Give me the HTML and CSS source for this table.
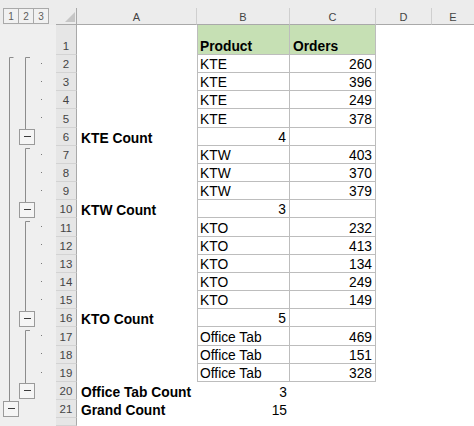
FILE: index.html
```html
<!DOCTYPE html>
<html>
<head>
<meta charset="utf-8">
<link rel="stylesheet" href="styles.css">
</head>
<body>
<div class="sheet">
  <div class="strip"></div>
  <div class="levels"><span class="lv">1</span><span class="lv">2</span><span class="lv">3</span></div>
  <div class="corner"><svg class="tri" width="20" height="16" viewBox="0 0 20 16"><polygon points="9,14 19,14 19,4" fill="#c6c6c6"/></svg></div>
  <div class="ch">A</div><div class="ch">B</div><div class="ch">C</div><div class="ch">D</div><div class="ch last">E</div>

  <div class="outline">
    <svg width="56" height="401" viewBox="0 0 56 401">
      <g fill="none" stroke="#8c8c8c" stroke-width="1">
        <path d="M13.5 32.5H9.5V376.5"/>
        <path d="M30 32.5H25.5V104.5"/>
        <path d="M30 123.5H25.5V177.5"/>
        <path d="M30 196.5H25.5V286.5"/>
        <path d="M30 305.5H25.5V358.5"/>
      </g>
      <g fill="#f5f5f5" stroke="#9a9a9a" stroke-width="1">
        <rect x="19.5" y="104.5" width="15" height="15"/>
        <rect x="19.5" y="177.5" width="15" height="15"/>
        <rect x="19.5" y="286.5" width="15" height="15"/>
        <rect x="19.5" y="358.5" width="15" height="15"/>
        <rect x="3.5" y="376.5" width="15" height="15"/>
      </g>
      <g fill="#3c3c3c">
        <rect x="24" y="111" width="7" height="1"/>
        <rect x="24" y="184" width="7" height="1"/>
        <rect x="24" y="293" width="7" height="1"/>
        <rect x="24" y="365" width="7" height="1"/>
        <rect x="8" y="383" width="7" height="1"/>
      </g>
      <g fill="#7a7a7a">
        <rect x="41" y="38" width="1" height="1"/>
        <rect x="41" y="56" width="1" height="1"/>
        <rect x="41" y="74" width="1" height="1"/>
        <rect x="41" y="92" width="1" height="1"/>
        <rect x="41" y="129" width="1" height="1"/>
        <rect x="41" y="147" width="1" height="1"/>
        <rect x="41" y="165" width="1" height="1"/>
        <rect x="41" y="201" width="1" height="1"/>
        <rect x="41" y="219" width="1" height="1"/>
        <rect x="41" y="238" width="1" height="1"/>
        <rect x="41" y="256" width="1" height="1"/>
        <rect x="41" y="274" width="1" height="1"/>
        <rect x="41" y="310" width="1" height="1"/>
        <rect x="41" y="328" width="1" height="1"/>
        <rect x="41" y="347" width="1" height="1"/>
      </g>
    </svg>
  </div>

  <div class="rh">1</div><div class="cell"></div><div class="cell t tl g b">Product</div><div class="cell t g b">Orders</div>
  <div class="rh">2</div><div class="cell"></div><div class="cell t tl">KTE</div><div class="cell t n">260</div>
  <div class="rh">3</div><div class="cell"></div><div class="cell t tl">KTE</div><div class="cell t n">396</div>
  <div class="rh">4</div><div class="cell"></div><div class="cell t tl">KTE</div><div class="cell t n">249</div>
  <div class="rh">5</div><div class="cell"></div><div class="cell t tl">KTE</div><div class="cell t n">378</div>
  <div class="rh">6</div><div class="cell a b">KTE Count</div><div class="cell t tl n">4</div><div class="cell t"></div>
  <div class="rh">7</div><div class="cell"></div><div class="cell t tl">KTW</div><div class="cell t n">403</div>
  <div class="rh">8</div><div class="cell"></div><div class="cell t tl">KTW</div><div class="cell t n">370</div>
  <div class="rh">9</div><div class="cell"></div><div class="cell t tl">KTW</div><div class="cell t n">379</div>
  <div class="rh">10</div><div class="cell a b">KTW Count</div><div class="cell t tl n">3</div><div class="cell t"></div>
  <div class="rh">11</div><div class="cell"></div><div class="cell t tl">KTO</div><div class="cell t n">232</div>
  <div class="rh">12</div><div class="cell"></div><div class="cell t tl">KTO</div><div class="cell t n">413</div>
  <div class="rh">13</div><div class="cell"></div><div class="cell t tl">KTO</div><div class="cell t n">134</div>
  <div class="rh">14</div><div class="cell"></div><div class="cell t tl">KTO</div><div class="cell t n">249</div>
  <div class="rh">15</div><div class="cell"></div><div class="cell t tl">KTO</div><div class="cell t n">149</div>
  <div class="rh">16</div><div class="cell a b">KTO Count</div><div class="cell t tl n">5</div><div class="cell t"></div>
  <div class="rh">17</div><div class="cell"></div><div class="cell t tl">Office Tab</div><div class="cell t n">469</div>
  <div class="rh">18</div><div class="cell"></div><div class="cell t tl">Office Tab</div><div class="cell t n">151</div>
  <div class="rh">19</div><div class="cell"></div><div class="cell t tl">Office Tab</div><div class="cell t n">328</div>
  <div class="rh">20</div><div class="cell a b">Office Tab Count</div><div class="cell n">3</div>
  <div class="rh">21</div><div class="cell a b">Grand Count</div><div class="cell n">15</div>
  <div class="rh"></div>
</div>
</body>
</html>
```

FILE: styles.css
```css
* {
  box-sizing: border-box;
}

html,
body {
  margin: 0;
  padding: 0;
  background: #ffffff;
}

body {
  font-family: "Liberation Sans", Arial, sans-serif;
}

.sheet {
  display: grid;
  grid-template-columns: 56px 21px 120px 93px 86px 56px 1fr;
  grid-template-rows: 8px 17px 30px repeat(20, 18.16px) 1fr;
  width: 474px;
  height: 426px;
  overflow: hidden;
  background: #ffffff;
}

.strip {
  grid-column: 1 / -1;
  background: #ececec;
}

.levels {
  background: #ececec;
  display: flex;
  align-items: flex-start;
  padding-left: 3px;
}

.lv {
  width: 16px;
  height: 16px;
  margin-right: -1px;
  border: 1px solid #a9a9a9;
  background: #f1f1f1;
  color: #5c5c5c;
  font-size: 10px;
  display: flex;
  align-items: center;
  justify-content: center;
}

.corner {
  background: #ececec;
  border-right: 1px solid #a9a9a9;
  border-bottom: 1px solid #a9a9a9;
}

.tri {
  display: block;
}

.ch {
  background: #ececec;
  border-right: 1px solid #cfcfcf;
  border-bottom: 1px solid #a9a9a9;
  color: #444444;
  font-size: 11px;
  display: flex;
  align-items: center;
  justify-content: center;
  padding-top: 1px;
}

.ch.last {
  border-right: none;
}

.outline {
  grid-column: 1;
  grid-row: 3 / -1;
  background: #efefef;
}

.outline svg {
  display: block;
}

.rh {
  grid-column: 2;
  background: #e6e6e6;
  border-right: 1px solid #a9a9a9;
  border-bottom: 1px solid #d3d3d3;
  color: #444444;
  font-size: 11.5px;
  line-height: 13px;
  display: flex;
  align-items: flex-end;
  justify-content: center;
  padding-bottom: 1px;
}

.cell {
  display: flex;
  align-items: flex-end;
  padding: 0 3px 0 3px;
  font-size: 13.8px;
  line-height: 14px;
  white-space: nowrap;
  color: #000000;
}

.a {
  padding-left: 4px;
}

.t {
  border-right: 1px solid #bdbdbd;
  border-bottom: 1px solid #bdbdbd;
}

.tl {
  border-left: 1px solid #bdbdbd;
  padding-left: 2px;
}

.g {
  background: #c6e0b4;
}

.b {
  font-weight: bold;
}

.n {
  justify-content: flex-end;
}
```
